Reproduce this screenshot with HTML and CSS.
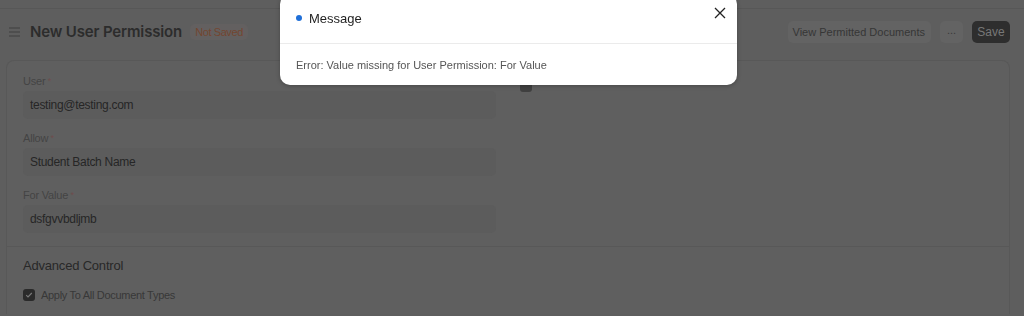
FILE: index.html
```html
<!DOCTYPE html>
<html lang="en">
<head>
    <meta charset="UTF-8">
    <meta name="viewport" content="width=device-width, initial-scale=1.0">
    <title>New User Permission</title>
    <link rel="stylesheet" href="styles.css">
</head>
<body>
    <div class="navbar"></div>

    <div class="page-head">
        <div class="title-area">
            <span class="menu-icon">
                <svg width="11" height="10" viewBox="0 0 11 10"><path d="M0 1h11M0 5h11M0 9h11" stroke="#3e3e3e" stroke-width="1.2"/></svg>
            </span>
            <h1 class="title">New User Permission</h1>
            <span class="badge">Not Saved</span>
        </div>
        <div class="actions">
            <button class="btn">View Permitted Documents</button>
            <button class="btn btn-more">...</button>
            <button class="btn btn-primary">Save</button>
        </div>
    </div>

    <div class="card">
        <div class="section">
            <div class="column">
                <div class="field">
                    <label class="required">User</label>
                    <div class="input">testing@testing.com</div>
                </div>
                <div class="field">
                    <label class="required">Allow</label>
                    <div class="input">Student Batch Name</div>
                </div>
                <div class="field">
                    <label class="required">For Value</label>
                    <div class="input">dsfgvvbdljmb</div>
                </div>
            </div>
            <div class="column">
                <div class="check-row side-check">
                    <span class="checkbox"></span>
                </div>
            </div>
        </div>
        <div class="section section-advanced">
            <h3 class="section-title">Advanced Control</h3>
            <div class="check-row">
                <span class="checkbox checked">
                    <svg width="8" height="8" viewBox="0 0 8 8"><path d="M1.2 4.2l1.8 1.8 3.8-4" fill="none" stroke="#7a7a7a" stroke-width="1.1"/></svg>
                </span>
                <span class="check-label">Apply To All Document Types</span>
            </div>
        </div>
    </div>

    <div class="modal">
        <div class="modal-header">
            <div class="modal-title"><span class="dot"></span>Message</div>
            <button class="close">
                <svg width="12" height="12" viewBox="0 0 12 12"><path d="M1 1l10 10M11 1L1 11" stroke="#222" stroke-width="1.3"/></svg>
            </button>
        </div>
        <div class="modal-body">Error: Value missing for User Permission: For Value</div>
    </div>
</body>
</html>
```

FILE: styles.css
```css
body {
    margin: 0;
    background-color: #5e5e5e;
    font-family: "Liberation Sans", Arial, sans-serif;
    color: #2e2e2e;
    overflow: hidden;
}
button {
    font-family: inherit;
}
.navbar {
    height: 8px;
    border-bottom: 1px solid #575757;
}
.page-head {
    display: flex;
    justify-content: space-between;
    align-items: center;
    height: 47px;
    padding: 0 14px 0 9px;
    margin-top: -1px;
}
.title-area {
    display: flex;
    align-items: center;
}
.menu-icon {
    display: flex;
    margin-right: 10px;
}
.title {
    margin: 0;
    font-family: Inter, "Noto Sans", sans-serif;
    font-size: 15px;
    font-weight: 600;
    color: #2c2c2c;
    letter-spacing: -0.15px;
}
.badge {
    margin-left: 8px;
    padding: 2px 5px;
    font-size: 11px;
    letter-spacing: -0.4px;
    color: #744630;
    background: #636060;
    border-radius: 5px;
}
.actions {
    display: flex;
    gap: 9px;
}
.btn {
    height: 22px;
    padding: 0 6px 0 5px;
    border: none;
    border-radius: 5px;
    background: #636363;
    color: #363636;
    font-size: 11px;
}
.btn-more {
    width: 23px;
    padding: 0 0 3px;
    color: #3a3a3a;
}
.btn-primary {
    width: 38px;
    padding: 0;
    background: #2e2e2e;
    color: #777;
    font-size: 12px;
}
.card {
    margin: 5px 14px 0 6px;
    border: 1px solid #585858;
    border-bottom: none;
    border-radius: 8px 8px 0 0;
    background: #5f5f5f;
}
.section {
    display: flex;
    gap: 24px;
    padding: 13px 16px 13px 16px;
}
.column {
    flex: 1;
}
.field {
    margin-bottom: 12px;
}
.field:last-child {
    margin-bottom: 0;
}
label {
    display: block;
    height: 14px;
    line-height: 14px;
    margin-bottom: 3px;
    font-size: 11px;
    letter-spacing: -0.2px;
    color: #444;
}
.required::after {
    content: " *";
    color: #6e4c4c;
    font-size: 9px;
    vertical-align: top;
}
.input {
    height: 28px;
    line-height: 28px;
    padding: 0 7px;
    border-radius: 5px;
    background: #5c5c5c;
    font-size: 12px;
    letter-spacing: -0.3px;
    color: #262626;
}
.section-advanced {
    display: block;
    border-top: 1px solid #585858;
    padding-top: 11px;
}
.section-title {
    margin: 0 0 15px;
    height: 16px;
    line-height: 16px;
    font-size: 13px;
    font-weight: normal;
    letter-spacing: -0.2px;
    color: #282828;
}
.check-row {
    display: flex;
    align-items: center;
    gap: 6px;
}
.side-check {
    margin-top: 6px;
}
.checkbox {
    display: flex;
    align-items: center;
    justify-content: center;
    width: 12px;
    height: 12px;
    border-radius: 3px;
    background: #404040;
}
.checkbox.checked {
    background: #2a2a2a;
}
.check-label {
    font-size: 11px;
    letter-spacing: -0.3px;
    color: #383838;
}
.modal {
    position: fixed;
    top: -6px;
    left: 280px;
    width: 457px;
    background: #fff;
    border-radius: 10px;
    box-shadow: 0 1px 4px rgba(0, 0, 0, 0.25);
}
.modal-header {
    display: flex;
    justify-content: space-between;
    align-items: flex-start;
    height: 49px;
    padding: 0 11px 0 16px;
    border-bottom: 1px solid #ebebeb;
}
.modal-title {
    display: flex;
    align-items: center;
    height: 48px;
    font-size: 13px;
    color: #1f1f1f;
}
.dot {
    width: 6px;
    height: 6px;
    margin: 0 7px 0 0;
    border-radius: 50%;
    background: #1f6fd8;
}
.close {
    display: flex;
    margin-top: 13px;
    padding: 0;
    border: none;
    background: none;
}
.modal-body {
    padding: 14px 16px 13px 16px;
    font-size: 11px;
    line-height: 14px;
    color: #555;
}
```
